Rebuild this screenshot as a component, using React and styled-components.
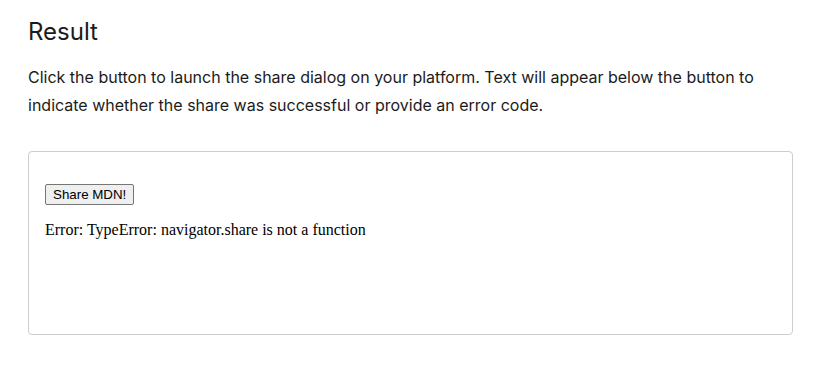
import React from 'react';
import styled, { createGlobalStyle } from 'styled-components';

const GlobalStyle = createGlobalStyle`
  html, body {
    margin: 0;
    padding: 0;
    background: #fff;
  }

  body {
    font-family: Inter, "Noto Sans", Arial, sans-serif;
    color: #1b1b1b;
  }

  *, *::after, *::before {
    box-sizing: border-box;
  }
`;

const Page = styled.main`
  padding: 12px 26px 0 28px;
  width: 819px;
`;

const Heading = styled.h2`
  font-size: 24px;
  font-weight: 400;
  line-height: 40px;
  margin: 0 0 11px;
  letter-spacing: 0;
`;

const Lead = styled.p`
  font-size: 16px;
  line-height: 28px;
  margin: 0 0 32px;
`;

const SampleFrame = styled.div`
  border: 1px solid #cdcdcd;
  border-radius: 4px;
  height: 184px;
  padding: 8px;
`;

// behaves like the body of the live-sample iframe: its margins don't collapse
const SampleBody = styled.div`
  display: flow-root;
  margin: 8px;
  font-family: "Liberation Serif", "Times New Roman", serif;
  font-size: 16px;
  color: #000;
`;

const SampleLine = styled.p`
  margin: 16px 0;
  line-height: normal;
`;

const ShareButton = styled.button`
  font-family: "Liberation Sans", Arial, sans-serif;
  font-size: 13.333px;
  color: #000;
  background: #efefef;
  border: 1px solid #767676;
  border-radius: 2px;
  padding: 2px 7px;
  line-height: normal;
`;

export default function App() {
  return (
    <>
      <GlobalStyle />
      <Page>
        <Heading>Result</Heading>
        <Lead>
          Click the button to launch the share dialog on your platform. Text will appear below the button
          to indicate whether the share was successful or provide an error code.
        </Lead>
        <SampleFrame>
          <SampleBody>
            <SampleLine>
              <ShareButton>Share MDN!</ShareButton>
            </SampleLine>
            <SampleLine>Error: TypeError: navigator.share is not a function</SampleLine>
          </SampleBody>
        </SampleFrame>
      </Page>
    </>
  );
}
